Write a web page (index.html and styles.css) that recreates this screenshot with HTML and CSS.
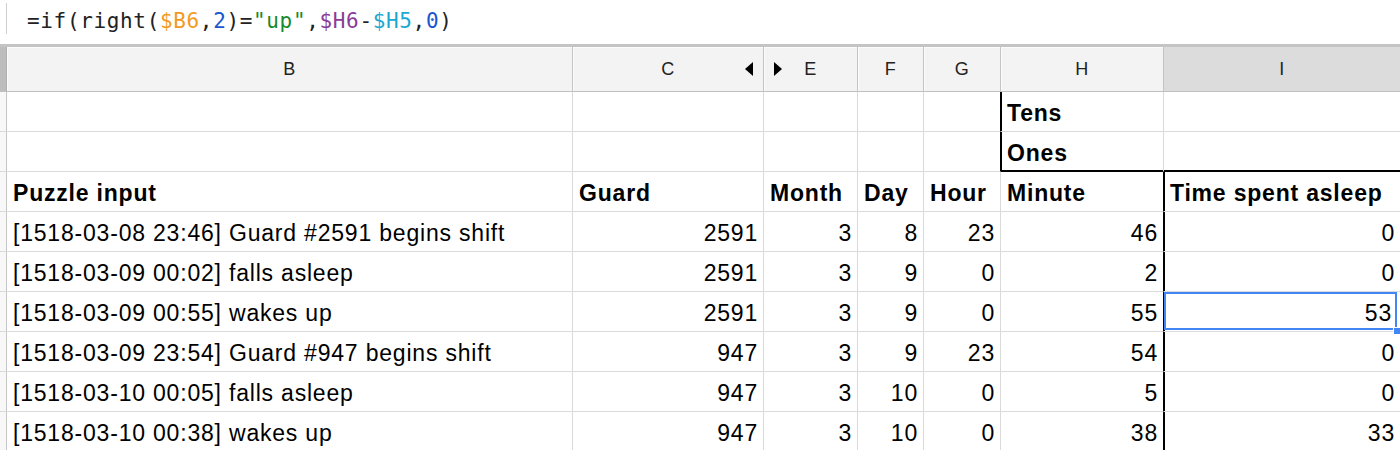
FILE: index.html
```html
<!DOCTYPE html>
<html lang="en">
<head>
<meta charset="utf-8">
<title>Guard schedule</title>
<link rel="stylesheet" href="styles.css">
</head>
<body>
<div class="formula-bar">
  <span class="fx-divider"></span>
  <code class="formula">=if(right(<span class="tok-ref1">$B6</span>,<span class="tok-num">2</span>)=<span class="tok-str">"up"</span>,<span class="tok-ref2">$H6</span>-<span class="tok-ref3">$H5</span>,<span class="tok-num">0</span>)</code>
</div>

<div class="sheet">
  <!-- column headers -->
  <div class="hd corner"></div>
  <div class="hd">B</div>
  <div class="hd hd-left-hidden">C</div>
  <div class="hd hd-right-hidden">E</div>
  <div class="hd">F</div>
  <div class="hd">G</div>
  <div class="hd">H</div>
  <div class="hd hd-active">I</div>

  <!-- row 2 -->
  <div class="stub"></div>
  <div class="c"></div><div class="c"></div><div class="c"></div><div class="c"></div>
  <div class="c edge-right"></div>
  <div class="c b box-left">Tens</div>
  <div class="c"></div>

  <!-- row 3 -->
  <div class="stub"></div>
  <div class="c"></div><div class="c"></div><div class="c"></div><div class="c"></div>
  <div class="c edge-right"></div>
  <div class="c b box-left box-bottom">Ones</div>
  <div class="c box-bottom-only"></div>

  <!-- row 4: labels -->
  <div class="stub"></div>
  <div class="c b">Puzzle input</div>
  <div class="c b">Guard</div>
  <div class="c b">Month</div>
  <div class="c b">Day</div>
  <div class="c b">Hour</div>
  <div class="c b split-right">Minute</div>
  <div class="c b split-left">Time spent asleep</div>

  <!-- data rows -->
  <div class="stub"></div>
  <div class="c">[1518-03-08 23:46] Guard #2591 begins shift</div>
  <div class="c n">2591</div><div class="c n">3</div><div class="c n">8</div><div class="c n">23</div>
  <div class="c n split-right">46</div><div class="c n split-left">0</div>

  <div class="stub"></div>
  <div class="c">[1518-03-09 00:02] falls asleep</div>
  <div class="c n">2591</div><div class="c n">3</div><div class="c n">9</div><div class="c n">0</div>
  <div class="c n split-right">2</div><div class="c n split-left">0</div>

  <div class="stub"></div>
  <div class="c">[1518-03-09 00:55] wakes up</div>
  <div class="c n">2591</div><div class="c n">3</div><div class="c n">9</div><div class="c n">0</div>
  <div class="c n split-right">55</div>
  <div class="c n split-left active">53<span class="selection"></span><span class="fill-handle"></span></div>

  <div class="stub"></div>
  <div class="c">[1518-03-09 23:54] Guard #947 begins shift</div>
  <div class="c n">947</div><div class="c n">3</div><div class="c n">9</div><div class="c n">23</div>
  <div class="c n split-right">54</div><div class="c n split-left">0</div>

  <div class="stub"></div>
  <div class="c">[1518-03-10 00:05] falls asleep</div>
  <div class="c n">947</div><div class="c n">3</div><div class="c n">10</div><div class="c n">0</div>
  <div class="c n split-right">5</div><div class="c n split-left">0</div>

  <div class="stub"></div>
  <div class="c">[1518-03-10 00:38] wakes up</div>
  <div class="c n">947</div><div class="c n">3</div><div class="c n">10</div><div class="c n">0</div>
  <div class="c n split-right">38</div><div class="c n split-left">33</div>
</div>
</body>
</html>
```

FILE: styles.css
```css
* {
  box-sizing: border-box;
}

html, body {
  margin: 0;
  padding: 0;
  background: #fff;
  overflow: hidden;
}

body {
  width: 1400px;
  height: 450px;
  font-family: "Liberation Sans", Arial, sans-serif;
  color: #000;
}

/* formula bar */
.formula-bar {
  height: 47px;
  display: flex;
  align-items: flex-start;
  border-bottom: 3px solid #c4c4c4;
  background: #fff;
}

.fx-divider {
  width: 1px;
  height: 31px;
  margin: 3px 0 0 6px;
  background: #cfcfcf;
}

.formula {
  margin-left: 20px;
  font-family: "DejaVu Sans Mono", "Liberation Mono", monospace;
  font-size: 21px;
  letter-spacing: 0.65px;
  line-height: 42px;
  color: #222;
  white-space: pre;
}

.tok-ref1 { color: #f39a1e; }
.tok-ref2 { color: #8a3b96; }
.tok-ref3 { color: #1ba8d2; }
.tok-num  { color: #1a56cf; }
.tok-str  { color: #178a2c; }

/* grid */
.sheet {
  display: grid;
  grid-template-columns: 7px 566px 191px 94px 66px 77px 163px 237px;
  grid-template-rows: 45px;
  grid-auto-rows: 40px;
}

.hd {
  position: relative;
  background: #f3f3f3;
  border-right: 1px solid #c4c4c4;
  border-bottom: 1px solid #c0c0c0;
  box-shadow: inset 1px 1px 0 #fbfbfb;
  font-size: 18px;
  letter-spacing: 0.4px;
  line-height: 42px;
  padding-top: 1px;
  text-align: center;
  color: #222;
}

.hd.corner {
  background: #bdbdbd;
  box-shadow: none;
  border-right: 1px solid #b0b0b0;
}

.hd.hd-active {
  background: #dcdcdc;
  box-shadow: none;
}

/* hidden column D markers */
.hd-left-hidden::after,
.hd-right-hidden::before {
  content: "";
  position: absolute;
  top: 15px;
  border-top: 7px solid transparent;
  border-bottom: 7px solid transparent;
}

.hd-left-hidden::after {
  right: 10px;
  border-right: 8px solid #000;
}

.hd-right-hidden::before {
  left: 10px;
  border-left: 8px solid #000;
}

.stub {
  background: #f8f8f8;
  border-right: 1px solid #c6c6c6;
  border-bottom: 1px solid #dadada;
}

.c {
  position: relative;
  height: 40px;
  padding: 3px 6px 0;
  border-right: 1px solid #dadada;
  border-bottom: 1px solid #dadada;
  font-size: 23px;
  letter-spacing: 0.8px;
  line-height: 36px;
  white-space: nowrap;
  overflow: visible;
}

.c.b { font-weight: bold; }
.c.n {
  text-align: right;
  padding-right: 5px;
}

/* black outline around the Tens / Ones block */
.c.edge-right { border-right-color: #000; }
.c.box-left { box-shadow: inset 1px 0 0 #000; }
.c.box-left.box-bottom {
  border-bottom-color: #000;
  box-shadow: inset 1px 0 0 #000, inset 0 -1px 0 #000;
}
.c.box-bottom-only {
  border-bottom-color: #000;
  box-shadow: inset 0 -1px 0 #000;
}

/* vertical rule between Minute and Time spent asleep */
.c.split-right { border-right-color: #000; }
.c.split-left { box-shadow: inset 1px 0 0 #000; }

/* active cell */
.c.active {
  z-index: 1;
  padding-right: 8px;
}

.selection {
  position: absolute;
  left: 0;
  top: 0;
  width: 233px;
  height: 38px;
  border: 2px solid #4285f4;
  pointer-events: none;
}

.fill-handle {
  position: absolute;
  left: 229px;
  top: 35px;
  width: 8px;
  height: 8px;
  background: #4285f4;
  border: 1px solid #fff;
}
```
